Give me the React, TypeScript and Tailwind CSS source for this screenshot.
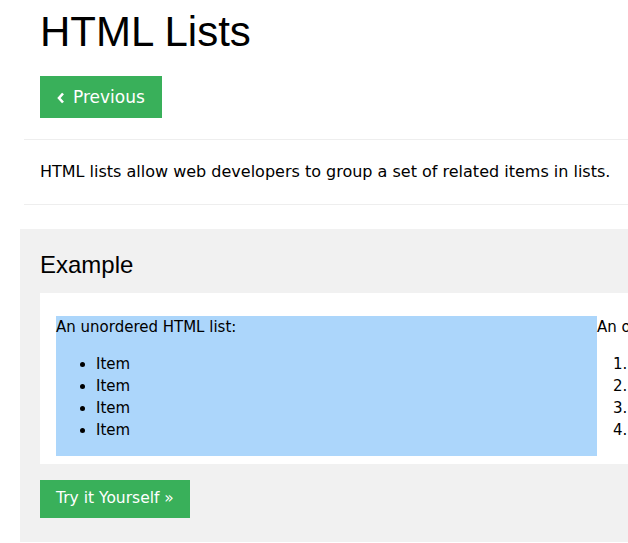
const items = ["Item", "Item", "Item", "Item"];

const App = () => {
  return (
    <div className="w-[628px] overflow-hidden bg-white text-black font-['DejaVu_Sans',Verdana,sans-serif]">
      <div className="pl-5">
        <div className="pl-5">
          <h1 className="mt-[8px] font-['Liberation_Sans',Arial,sans-serif] text-[42px] leading-[48px] font-normal">
            HTML Lists
          </h1>
          <div className="mt-[20px] flex">
            <a className="flex h-[42px] items-center gap-[8px] bg-[#39b05a] pr-[17px] pl-[17px] text-[17px] text-white">
              <svg width="8" height="12" viewBox="0 0 8 12" className="mt-[1px]">
                <path d="M6 1.5 L2 6 L6 10.5" fill="none" stroke="white" strokeWidth="2.6" />
              </svg>
              <span className="mt-[1px]">Previous</span>
            </a>
          </div>
        </div>

        <hr className="mt-[21px] ml-1 border-0 border-t border-[#eeeeee]" />
        <p className="py-5 pl-5 text-[16px] leading-[24px]">
          HTML lists allow web developers to group a set of related items in lists.
        </p>
        <hr className="ml-1 border-0 border-t border-[#eeeeee]" />

        <div className="mt-6 bg-[#f1f1f1] px-5 pt-[22px] pb-6">
          <h2 className="font-['Liberation_Sans',Arial,sans-serif] text-[24px] leading-[28px] font-normal">
            Example
          </h2>
          <div className="mt-[14px] w-[1200px] bg-white pt-[23px] pb-2 pl-4">
            <div className="flex text-[15px] leading-[22px]">
              <div className="w-[541px] bg-[#acd6fb]">
                <p>An unordered HTML list:</p>
                <ul className="my-[15px] list-disc pl-10">
                  {items.map((item, i) => (
                    <li key={i}>{item}</li>
                  ))}
                </ul>
              </div>
              <div className="w-[541px]">
                <p>An ordered HTML list:</p>
                <ol className="my-[15px] pl-4">
                  {items.map((item, i) => (
                    <li key={i} className="flex">
                      <span className="w-6">{i + 1}.</span>
                      <span>{item}</span>
                    </li>
                  ))}
                </ol>
              </div>
            </div>
          </div>
          <div className="mt-4 flex">
            <a className="flex h-[38px] items-center bg-[#39b05a] px-4 text-[15.5px] text-white">
              Try it Yourself »
            </a>
          </div>
        </div>
      </div>
    </div>
  );
};

export default App;
